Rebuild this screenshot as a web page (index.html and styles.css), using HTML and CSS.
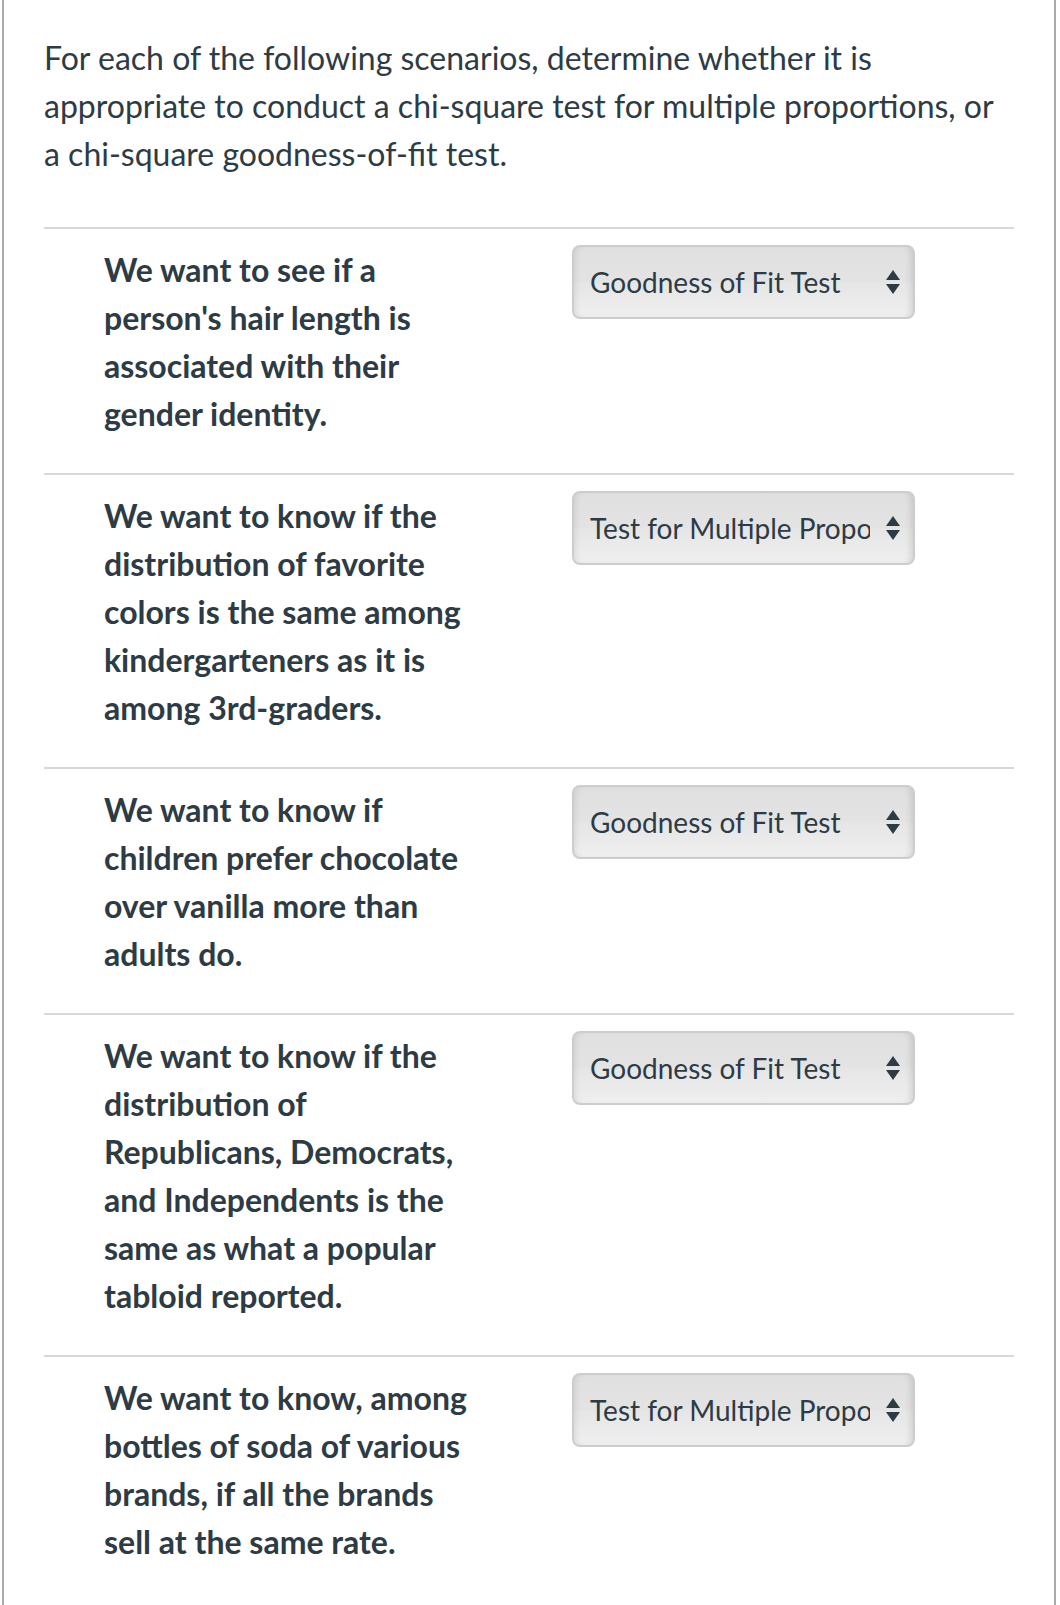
FILE: index.html
```html
<!DOCTYPE html>
<html>
<head>
<meta charset="utf-8">
<link rel="stylesheet" href="styles.css">
</head>
<body>
<div class="frame">
  <p class="intro">For each of the following scenarios, determine whether it is appropriate to conduct a chi-square test for multiple proportions, or a chi-square goodness-of-fit test.</p>

  <div class="row">
    <div class="question">We want to see if a person's hair length is associated with their gender identity.</div>
    <div class="answer"><div class="select"><span class="label">Goodness of Fit Test</span><svg class="arrows" width="14" height="24" viewBox="0 0 14 24"><polygon points="0,10 7,0 14,10"/><polygon points="0,14 14,14 7,24"/></svg></div></div>
  </div>

  <div class="row">
    <div class="question">We want to know if the distribution of favorite colors is the same among kindergarteners as it is among 3rd-graders.</div>
    <div class="answer"><div class="select"><span class="label">Test for Multiple Proportions</span><svg class="arrows" width="14" height="24" viewBox="0 0 14 24"><polygon points="0,10 7,0 14,10"/><polygon points="0,14 14,14 7,24"/></svg></div></div>
  </div>

  <div class="row">
    <div class="question">We want to know if children prefer chocolate over vanilla more than adults do.</div>
    <div class="answer"><div class="select"><span class="label">Goodness of Fit Test</span><svg class="arrows" width="14" height="24" viewBox="0 0 14 24"><polygon points="0,10 7,0 14,10"/><polygon points="0,14 14,14 7,24"/></svg></div></div>
  </div>

  <div class="row">
    <div class="question">We want to know if the distribution of Republicans, Democrats, and Independents is the same as what a popular tabloid reported.</div>
    <div class="answer"><div class="select"><span class="label">Goodness of Fit Test</span><svg class="arrows" width="14" height="24" viewBox="0 0 14 24"><polygon points="0,10 7,0 14,10"/><polygon points="0,14 14,14 7,24"/></svg></div></div>
  </div>

  <div class="row">
    <div class="question">We want to know, among bottles of soda of various brands, if all the brands sell at the same rate.</div>
    <div class="answer"><div class="select"><span class="label">Test for Multiple Proportions</span><svg class="arrows" width="14" height="24" viewBox="0 0 14 24"><polygon points="0,10 7,0 14,10"/><polygon points="0,14 14,14 7,24"/></svg></div></div>
  </div>
</div>
</body>
</html>
```

FILE: styles.css
```css
html, body {
  margin: 0;
  padding: 0;
  background: #ffffff;
}

body {
  font-family: Lato, "Open Sans", sans-serif;
  color: #2d3b45;
}

.frame {
  box-sizing: border-box;
  width: 1054px;
  min-height: 1605px;
  margin-left: 2px;
  border-left: 2px solid #aaaaaa;
  border-right: 2px solid #aaaaaa;
  padding: 34px 40px 0 40px;
}

.intro {
  margin: 0 0 49px 0;
  font-size: 32px;
  line-height: 48px;
}

.row {
  display: flex;
  border-top: 2px solid #d8d8d8;
  padding: 0 0 0 60px;
}

.question {
  width: 372px;
  padding: 17px 0 35px 0;
  font-size: 32px;
  line-height: 48px;
  font-weight: 700;
}

.answer {
  margin-left: 96px;
  padding-top: 16px;
}

.select {
  box-sizing: border-box;
  width: 343px;
  height: 74px;
  display: flex;
  align-items: center;
  padding: 0 13px 0 16px;
  border: 2px solid #cdcdcd;
  border-radius: 8px;
  background: linear-gradient(to bottom, #e0e0e0 0%, #e3e3e3 48%, #e6e6e6 52%, #efefef 100%);
  box-shadow: inset -6px 0 6px -4px rgba(0, 0, 0, 0.12), inset 6px 0 6px -4px rgba(0, 0, 0, 0.08);
}

.label {
  display: block;
  width: 280px;
  overflow: hidden;
  white-space: nowrap;
  font-size: 28px;
  line-height: 34px;
  color: #2d3b45;
}

.arrows {
  margin-left: auto;
  fill: #2d3b45;
}
```
